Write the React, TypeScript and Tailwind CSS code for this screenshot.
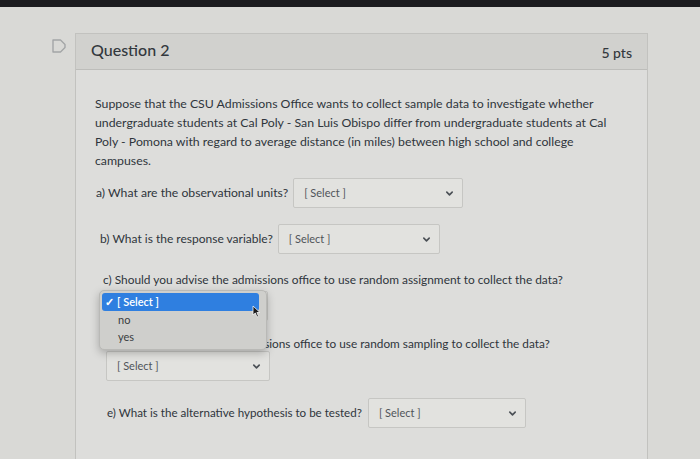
import { FunctionComponent } from 'react';

const font = { fontFamily: 'Lato, "Noto Sans", sans-serif' };

const Chevron = () => (
  <svg width="9" height="9" viewBox="0 0 10 10" className="text-[#4a4f55]">
    <path d="M2 3.5 L5 6.5 L8 3.5" fill="none" stroke="currentColor" strokeWidth="1.8" strokeLinecap="round" strokeLinejoin="round" />
  </svg>
);

interface SelectBoxProps {
  width: string;
  hideLabel?: boolean;
}

const SelectBox: FunctionComponent<SelectBoxProps> = ({ width, hideLabel }) => (
  <div className={`flex items-center justify-between h-[30px] pl-[10px] pr-[8px] border border-[#c6c6c3] bg-[#e2e2df] rounded-[2px] ${width}`}>
    <span className="text-[11px] text-[#505459]">{hideLabel ? '' : '[ Select ]'}</span>
    <Chevron />
  </div>
);

const App: FunctionComponent = () => {
  return (
    <div className="relative w-[700px] h-[459px] overflow-hidden bg-[#d9d9d6] text-[#2d3b45]" style={font}>
      {/* screen bezel */}
      <div className="h-[7px] bg-[#1c1c1f]" />

      <div className="flex">
        {/* bookmark */}
        <div className="w-[75px] pt-[32px] pl-[52px]">
          <svg width="14" height="14" viewBox="0 0 14 14">
            <path d="M1 1 H8.5 L13 5.5 V8.5 L8.5 13 H1 Z" fill="none" stroke="#a3a5a7" strokeWidth="1.4" strokeLinejoin="round" />
          </svg>
        </div>

        {/* question card */}
        <div className="mt-[26px] w-[573px] h-[430px] border border-[#c2c2bf] bg-[#dddddb]">
          <div className="flex items-center justify-between h-[36px] pl-[15px] pr-[15px] bg-[#d1d1ce] border-b border-[#bdbdba]">
            <span className="text-[16px] font-medium text-[#33383d] pb-[3px]">Question 2</span>
            <span className="text-[14px] font-medium text-[#33383d] pt-[1px]">5 pts</span>
          </div>

          <div className="pl-[19px] pr-[20px] pt-[24px]">
            <p className="text-[12.3px] leading-[19px] text-[#2f353b] w-[518px]">
              Suppose that the CSU Admissions Office wants to collect sample data to investigate whether undergraduate students at Cal Poly - San Luis Obispo differ from undergraduate students at Cal Poly - Pomona with regard to average distance (in miles) between high school and college campuses.
            </p>

            <div className="flex items-center gap-[5px] mt-[8px] ml-[1px] text-[12.2px] text-[#2f353b]">
              <span>a) What are the observational units?</span>
              <SelectBox width="w-[170px]" />
            </div>

            <div className="flex items-center gap-[5px] mt-[16px] ml-[5px] text-[12px] text-[#2f353b]">
              <span>b) What is the response variable?</span>
              <SelectBox width="w-[162px]" />
            </div>

            <div className="mt-[17px] ml-[8px] text-[11.9px] leading-[18px] text-[#2f353b]">
              c) Should you advise the admissions office to use random assignment to collect the data?
            </div>
            <div className="mt-[2px] ml-[6px]">
              <SelectBox width="w-[167px]" hideLabel />
            </div>

            <div className="mt-[14px] ml-[10px] text-[11.8px] leading-[18px] text-[#2f353b]">
              d) Should you advise the admissions office to use random sampling to collect the data?
            </div>
            <div className="mt-[-2px] ml-[11px]">
              <SelectBox width="w-[164px]" />
            </div>

            <div className="flex items-center gap-[6px] mt-[17px] ml-[12px] text-[11.6px] text-[#2f353b]">
              <span>e) What is the alternative hypothesis to be tested?</span>
              <SelectBox width="w-[158px]" />
            </div>
          </div>
        </div>
      </div>

      {/* open dropdown menu for c) */}
      <div className="absolute left-[99px] top-[290px] w-[168px] h-[60px] rounded-[5px] bg-[#cfcfcc] border border-[#b9b9b6] shadow-[0_3px_8px_rgba(0,0,0,0.25)] p-[2px]">
        <div className="flex items-center h-[18px] w-[157px] rounded-[3px] bg-[#2f7fe0] text-white text-[11px] font-semibold pl-[3px]">
          <span className="mr-[3px]">✓</span>
          <span>[ Select ]</span>
        </div>
        <div className="h-[17px] pl-[16px] text-[11px] leading-[17px] text-[#3a3d40]">no</div>
        <div className="h-[17px] pl-[16px] text-[11px] leading-[17px] text-[#3a3d40]">yes</div>
      </div>

      {/* mouse pointer */}
      <svg className="absolute left-[252px] top-[305px]" width="9" height="13" viewBox="0 0 9 13">
        <path d="M1 1 L1 10 L3.3 8 L5 12 L6.5 11.3 L4.9 7.5 L8 7.5 Z" fill="#1b1b1b" stroke="#f5f5f5" strokeWidth="0.8" strokeLinejoin="round" />
      </svg>
    </div>
  );
};

export default App;
